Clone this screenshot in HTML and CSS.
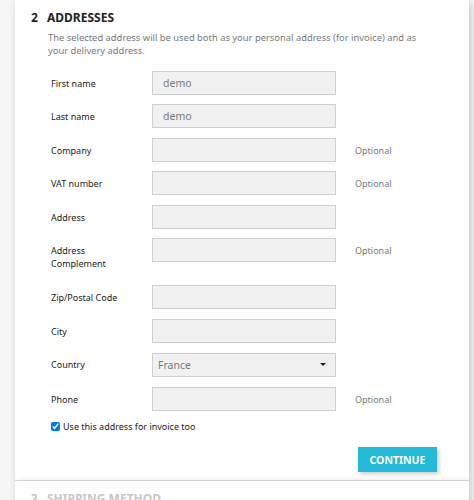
FILE: index.html
```html
<!DOCTYPE html>
<html lang="en">
<head>
    <meta charset="UTF-8">
    <meta name="viewport" content="width=device-width, initial-scale=1.0">
    <title>Checkout - Addresses</title>
    <link rel="stylesheet" href="styles.css">
</head>
<body>
    <section class="step step-current">
        <h1 class="step-title"><span class="step-number">2</span>Addresses</h1>
        <p class="step-help">The selected address will be used both as your personal address (for invoice) and as your delivery address.</p>

        <form class="address-form">
            <div class="form-row">
                <label>First name</label>
                <input type="text" value="demo">
                <span class="form-note"></span>
            </div>
            <div class="form-row">
                <label>Last name</label>
                <input type="text" value="demo">
                <span class="form-note"></span>
            </div>
            <div class="form-row">
                <label>Company</label>
                <input type="text">
                <span class="form-note">Optional</span>
            </div>
            <div class="form-row">
                <label>VAT number</label>
                <input type="text">
                <span class="form-note">Optional</span>
            </div>
            <div class="form-row">
                <label>Address</label>
                <input type="text">
                <span class="form-note"></span>
            </div>
            <div class="form-row">
                <label>Address Complement</label>
                <input type="text">
                <span class="form-note">Optional</span>
            </div>
            <div class="form-row">
                <label>Zip/Postal Code</label>
                <input type="text">
                <span class="form-note"></span>
            </div>
            <div class="form-row">
                <label>City</label>
                <input type="text">
                <span class="form-note"></span>
            </div>
            <div class="form-row">
                <label>Country</label>
                <div class="select-wrap">
                    <select>
                        <option>France</option>
                    </select>
                </div>
                <span class="form-note"></span>
            </div>
            <div class="form-row">
                <label>Phone</label>
                <input type="text">
                <span class="form-note">Optional</span>
            </div>

            <label class="check-row">
                <input type="checkbox" checked>
                Use this address for invoice too
            </label>

            <div class="form-footer">
                <button type="button" class="btn-continue">Continue</button>
            </div>
        </form>
    </section>

    <section class="step step-next">
        <h1 class="step-title"><span class="step-number">3</span>Shipping Method</h1>
    </section>
</body>
</html>
```

FILE: styles.css
```css
body {
    font-family: "Noto Sans", "Open Sans", sans-serif;
    margin: 0;
    padding: 0 5px 0 15px;
    background-color: #f6f6f6;
    color: #232323;
}

.step {
    background-color: white;
    box-shadow: 2px 2px 8px 0 rgba(0, 0, 0, 0.2);
    padding: 10px 32px 8px 16px;
}

.step-current {
    border-bottom: 1px solid #dedede;
}

.step-title {
    margin: 0;
    font-size: 12px;
    line-height: 16px;
    font-weight: 700;
    text-transform: uppercase;
}

.step-number {
    display: inline-block;
    width: 16px;
}

.step-help {
    margin: 5px 0 0 17px;
    font-size: 9.4px;
    line-height: 13px;
    color: #7a7a7a;
}

.address-form {
    padding: 13.5px 0 0 20px;
}

.form-row {
    display: grid;
    grid-template-columns: 101px 184px 1fr;
    align-items: start;
    margin-bottom: 9.6px;
}

.form-row label {
    font-size: 9px;
    line-height: 13px;
    padding: 6px 0 5px;
    max-width: 70px;
}

.form-row input,
.form-row select {
    box-sizing: border-box;
    width: 184px;
    height: 24px;
    margin: 0;
    padding: 0 10px;
    background-color: #f1f1f1;
    border: 1px solid #d0d0d0;
    font-family: inherit;
    font-size: 10.5px;
    color: #7a7a7a;
}

.form-row select {
    appearance: none;
    padding-left: 5px;
    border-radius: 0;
}

.select-wrap {
    position: relative;
}

.select-wrap::after {
    content: "";
    position: absolute;
    right: 10px;
    top: 11px;
    border-left: 3px solid transparent;
    border-right: 3px solid transparent;
    border-top: 3px solid #232323;
}

.form-note {
    padding: 6px 0 0 19px;
    font-size: 9px;
    line-height: 13px;
    color: #7a7a7a;
}

.check-row {
    display: flex;
    align-items: center;
    gap: 3px;
    margin-top: 2px;
    font-size: 9px;
    line-height: 13px;
}

.check-row input {
    width: 9px;
    height: 9px;
    margin: 0;
}

.form-footer {
    display: flex;
    justify-content: flex-end;
    margin-top: 14px;
}

.btn-continue {
    width: 79px;
    height: 25px;
    border: none;
    background-color: #24b9d7;
    color: white;
    font-family: inherit;
    font-size: 10.5px;
    font-weight: 700;
    text-transform: uppercase;
    box-shadow: 2px 2px 4px 0 rgba(0, 0, 0, 0.2);
    cursor: pointer;
}

.step-next .step-title {
    color: #c8c8c8;
}
```
